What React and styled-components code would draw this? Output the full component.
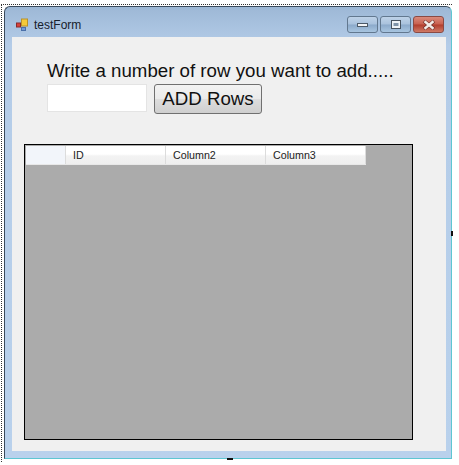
import styled, { createGlobalStyle } from "styled-components";

const GlobalStyle = createGlobalStyle`
  html, body {
    margin: 0;
    padding: 0;
    background: #ffffff;
  }
`;

const Selection = styled.div`
  box-sizing: border-box;
  width: 451px;
  height: 458px;
  margin: 4px 0 0 1px;
  padding: 1px 0 0 2px;
  border-top: 1px dotted #333;
  border-left: 1px dotted #333;
`;

const Window = styled.div`
  box-sizing: border-box;
  width: 448px;
  height: 453px;
  padding: 0 5px 7px 7px;
  display: flex;
  flex-direction: column;
  background: linear-gradient(180deg, #9db8d6 0, #b4cce8 38px, #b9d1ec 100%);
  border: 1px solid #5ec6d2;
  border-top-color: #3a4a5c;
  border-left-color: #3a4a5c;
  border-radius: 6px 6px 0 0;
`;

const TitleBar = styled.div`
  height: 30px;
  flex: none;
  display: flex;
  align-items: center;
  padding-top: 5px;
  box-sizing: border-box;
`;

const AppIcon = styled.svg`
  width: 16px;
  height: 16px;
  margin: 0 4px 0 2px;
  flex: none;
`;

const Title = styled.span`
  flex: 1;
  font: 12px "Liberation Sans", Arial, sans-serif;
  color: #16202c;
`;

const Controls = styled.div`
  display: flex;
  gap: 2px;
  align-self: flex-start;
  margin: 4px 2px 0 0;
`;

const ControlButton = styled.div`
  width: 31px;
  height: 17px;
  box-sizing: border-box;
  display: flex;
  align-items: center;
  justify-content: center;
  border: 1px solid ${(p) => (p.$close ? "#8a4a44" : "#62788f")};
  border-radius: 3px;
  background: ${(p) =>
    p.$close
      ? "linear-gradient(180deg, #d98a7c 0, #c9604f 48%, #b13c2c 52%, #cf7a66 100%)"
      : "linear-gradient(180deg, #bed2e8 0, #a9c2dd 48%, #8ba9ca 52%, #a8c5e0 100%)"};
`;

const Client = styled.div`
  flex: 1;
  background: #f0f0f0;
  padding: 21px 33px 11px 12px;
  display: flex;
  flex-direction: column;
`;

const Prompt = styled.div`
  margin-left: 23px;
  font: 18.7px/26px "Liberation Sans", Arial, sans-serif;
  color: #111;
  white-space: nowrap;
`;

const InputRow = styled.div`
  margin: 0 0 0 23px;
  display: flex;
  gap: 7px;
  align-items: flex-start;
`;

const NumberBox = styled.div`
  width: 100px;
  height: 28px;
  background: #ffffff;
  border: 1px solid #e4e4e4;
  box-sizing: border-box;
`;

const AddButton = styled.div`
  width: 108px;
  height: 30px;
  box-sizing: border-box;
  border: 1px solid #707070;
  border-radius: 3px;
  background: linear-gradient(180deg, #f2f2f2 0, #ebebeb 48%, #dddddd 52%, #cfcfcf 100%);
  font: 18.7px/28px "Liberation Sans", Arial, sans-serif;
  color: #111;
  text-align: center;
`;

const Grid = styled.div`
  margin-top: 30px;
  flex: 1;
  box-sizing: border-box;
  border: 1px solid #000;
  background: #ababab;
  padding: 1px;
`;

const HeaderRow = styled.div`
  display: flex;
  width: 340px;
  height: 18px;
  border-bottom: 1px solid #e8e8e8;
`;

const Cell = styled.div`
  box-sizing: border-box;
  width: ${(p) => p.$width}px;
  padding-left: 7px;
  border-right: 1px solid #dcdcdc;
  background: ${(p) =>
    p.$corner ? "#f2f5fa" : "linear-gradient(180deg, #ffffff 0, #ffffff 45%, #f3f3f3 55%, #efefef 100%)"};
  font: 10.7px/19px "Liberation Sans", Arial, sans-serif;
  color: #222;
`;

const Cursor = styled.div`
  position: absolute;
  left: 451px;
  top: 231px;
  width: 2px;
  height: 5px;
  background: #111;
`;

const BottomMark = styled.div`
  position: absolute;
  left: 227px;
  top: 458px;
  width: 6px;
  height: 2px;
  background: #111;
`;

const columns = ["ID", "Column2", "Column3"];

const App = () => {
  return (
    <>
      <GlobalStyle />
      <Selection>
        <Window>
          <TitleBar>
            <AppIcon viewBox="0 0 16 16">
              <rect x="7.5" y="2" width="6" height="7" fill="#f4c93a" stroke="#b8912a" />
              <rect x="2.5" y="6" width="4" height="4" fill="#d8413a" stroke="#8a2a2a" />
              <rect x="7.5" y="10.5" width="4" height="3" fill="#6f9ade" stroke="#4a6fa8" />
            </AppIcon>
            <Title>testForm</Title>
            <Controls>
              <ControlButton>
                <svg width="12" height="6" viewBox="0 0 12 6">
                  <rect x="0.5" y="1.5" width="10" height="3" fill="#f2f4f6" stroke="#4d5a68" />
                </svg>
              </ControlButton>
              <ControlButton>
                <svg width="10" height="9" viewBox="0 0 10 9">
                  <rect x="0.5" y="0.5" width="9" height="8" fill="#eef2f6" stroke="#46525f" />
                  <rect x="2.5" y="3" width="5" height="3" fill="#7f93a8" />
                </svg>
              </ControlButton>
              <ControlButton $close>
                <svg width="14" height="10" viewBox="0 0 14 10">
                  <path d="M2 1l10 8M12 1L2 9" stroke="#6e2f29" strokeWidth="3.6" />
                  <path d="M2.5 1.3l9 7.4M11.5 1.3l-9 7.4" stroke="#f3ece8" strokeWidth="2.4" />
                </svg>
              </ControlButton>
            </Controls>
          </TitleBar>
          <Client>
            <Prompt>Write a number of row you want to add.....</Prompt>
            <InputRow>
              <NumberBox />
              <AddButton>ADD Rows</AddButton>
            </InputRow>
            <Grid>
              <HeaderRow>
                <Cell $width={40} $corner />
                {columns.map((name) => (
                  <Cell key={name} $width={100}>
                    {name}
                  </Cell>
                ))}
              </HeaderRow>
            </Grid>
          </Client>
        </Window>
      </Selection>
      <Cursor />
      <BottomMark />
    </>
  );
};

export default App;
